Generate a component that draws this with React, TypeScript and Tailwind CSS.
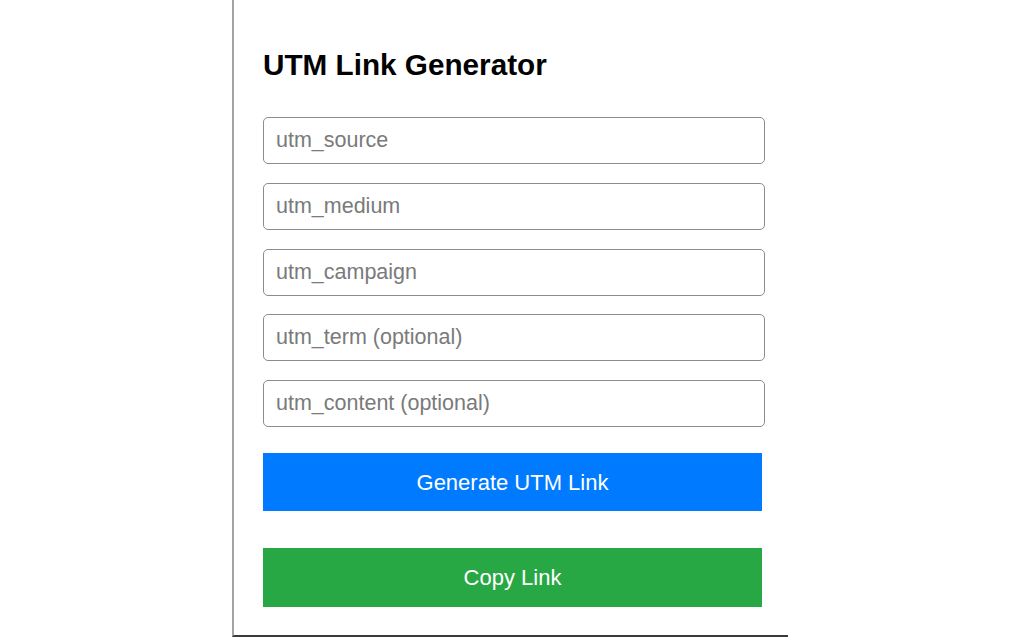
import { useState } from "react";

const fields = [
  "utm_source",
  "utm_medium",
  "utm_campaign",
  "utm_term (optional)",
  "utm_content (optional)",
];

export default function App() {
  const [values, setValues] = useState<string[]>(fields.map(() => ""));

  return (
    <div
      className="w-[1020px] h-[638px] bg-white overflow-hidden flex items-start"
      style={{ fontFamily: '"Liberation Sans", Arial, sans-serif' }}
    >
      <div className="ml-[232px] w-[556px] h-[637px] border-l-2 border-l-[#a3a3a3] border-b-2 border-b-[#3a3a3a] pl-[29px] pt-[48px] flex flex-col">
        <h2 className="text-[29.7px] leading-[34px] font-bold text-black m-0">
          UTM Link Generator
        </h2>
        <div className="mt-[35px] flex flex-col gap-[18.75px]">
          {fields.map((f, i) => (
            <input
              key={f}
              type="text"
              placeholder={f}
              value={values[i]}
              onChange={(e) => {
                const next = [...values];
                next[i] = e.target.value;
                setValues(next);
              }}
              className="w-[502px] h-[47px] border-[1.5px] border-[#8c8c8c] rounded-[5px] px-[12px] text-[21.5px] text-black placeholder:text-[#7a7a7a] outline-none bg-white"
            />
          ))}
        </div>
        <button className="mt-[26px] w-[499px] h-[58px] bg-[#007bff] text-white text-[22px]">
          Generate UTM Link
        </button>
        <button className="mt-[37px] w-[499px] h-[59px] bg-[#28a745] text-white text-[22px]">
          Copy Link
        </button>
      </div>
    </div>
  );
}
